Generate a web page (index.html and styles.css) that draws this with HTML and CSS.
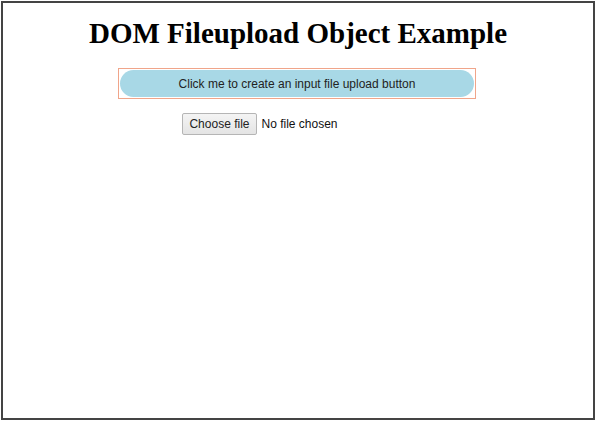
FILE: index.html
```html
<!DOCTYPE html>
<html>
  <head>
    <title>DOM Fileupload Object</title>
    <link rel="stylesheet" href="styles.css">
  </head>

  <body>
    <div id="frame">
      <h1>DOM Fileupload Object Example</h1>

      <div class="row">
        <div class="btn-wrap">
          <button id="createBtn">Click me to create an input file upload button</button>
        </div>
      </div>

      <!-- the input created by the button goes here -->
      <div class="row upload">
        <span class="choose">Choose file</span>
        <span class="status">No file chosen</span>
      </div>
    </div>
  </body>
</html>
```

FILE: styles.css
```css
body {
  margin: 0;
  padding: 1px;
  background: #fff;
}

#frame {
  width: 590px;
  height: 415px;
  border: 2px solid #444;
  font-family: "Liberation Sans", Arial, sans-serif;
}

h1 {
  margin: 13px 0 0 0;
  text-align: center;
  font-family: "Liberation Serif", "Times New Roman", serif;
  font-weight: bold;
  font-size: 29px;
  line-height: 34px;
  color: #000;
}

.row {
  display: flex;
  justify-content: center;
}

.btn-wrap {
  margin-top: 18px;
  margin-right: 2px;
  padding: 1px;
  border: 1px solid #f0a58a;
}

#createBtn {
  width: 354px;
  height: 27px;
  border: none;
  border-radius: 14px;
  background-color: #a8d8e6;
  color: #222;
  font-family: "Liberation Sans", Arial, sans-serif;
  font-size: 12px;
  cursor: pointer;
}

.upload {
  margin-top: 14px;
  padding-right: 76px;
  align-items: center;
  font-size: 12px;
}

.choose {
  display: inline-block;
  padding: 2px 6px;
  height: 16px;
  line-height: 16px;
  border: 1px solid #b5b5b5;
  border-radius: 2px;
  background: linear-gradient(#f4f4f4, #e4e4e4);
  color: #222;
}

.status {
  margin-left: 5px;
  color: #111;
}
```
